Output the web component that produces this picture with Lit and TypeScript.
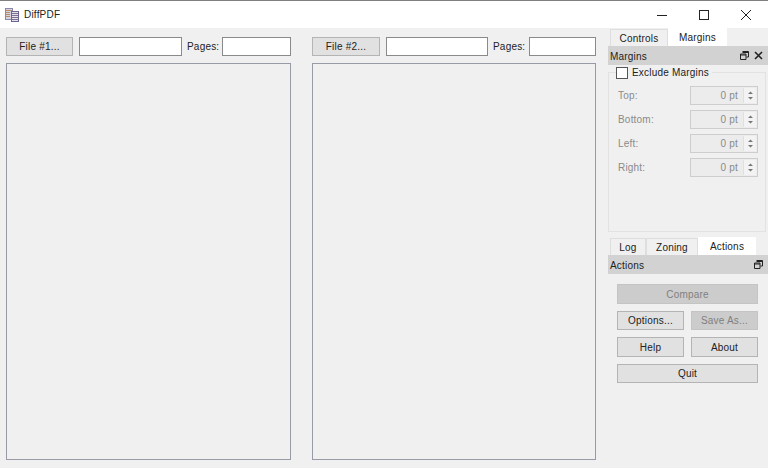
import { LitElement, html, css, svg } from "lit";
import { customElement } from "lit/decorators.js";

const floatIcon = svg`<svg class="ico" width="9" height="9" viewBox="0 0 9 9"><path d="M2.5.5h6v5.5H6.5M.5 3h5.5v5.5H.5z" fill="none" stroke="#222"/><path d="M2.5 1.5h6M.5 4h5.5" stroke="#222"/></svg>`;
const closeIcon = svg`<svg class="ico" width="9" height="9" viewBox="0 0 9 9"><path d="M1 1l7 7M8 1l-7 7" stroke="#222" stroke-width="1.6"/></svg>`;

@customElement("app-root")
export class AppRoot extends LitElement {
  static styles = css`
    :host { display: block; width: 768px; height: 468px; overflow: hidden; background: #f0f0f0; color: #222;
      font-family: "Liberation Sans", sans-serif; font-size: 10px; line-height: 14px; letter-spacing: 0.2px; }
    * { box-sizing: border-box; }
    .title { height: 28px; background: #fff; border-top: 1px solid #808080; display: flex; align-items: center; padding-left: 4px; }
    .title .name { margin-left: 4px; }
    .winbtns { margin-left: auto; margin-right: 1px; display: flex; }
    .winbtn { width: 42px; height: 27px; display: flex; align-items: center; justify-content: center; }
    .main { display: flex; height: 440px; }
    .pane { width: 285px; margin-left: 6px; padding-top: 9px; display: flex; flex-direction: column; gap: 7px; }
    .pane.second { margin-left: 21px; width: 284px; }
    .top { display: flex; align-items: center; height: 19px; }
    .btn { height: 19px; padding-top: 1px; border: 1px solid #b4b4b4; background: #e1e1e1; display: flex; align-items: center; justify-content: center; }
    .btn.file { width: 67px; margin-right: 6px; }
    .pane.second .btn.file { width: 68px; }
    .input { height: 19px; background: #fff; border: 1px solid #8a8a8a; }
    .input.path { width: 103px; }
    .input.pages { width: 69px; }
    .pane.second .input.pages { width: 67px; }
    .pane.second .input.path { width: 102px; }
    .plabel { margin-left: 5px; width: 35px; }
    .pane.second .plabel { width: 36px; }
    .frame { height: 397px; border: 1px solid #979ba6; }
    .dock { width: 160px; margin-left: 12px; display: flex; flex-direction: column; padding-top: 1px; }
    .tabs { display: flex; height: 17px; padding-left: 2px; }
    .tab { height: 17px; padding-top: 1px; border: 1px solid #dedede; border-bottom: 0; display: flex; align-items: center; justify-content: center; background: #f0f0f0; }
    .tab.on { height: 18px; margin-top: -1px; padding-top: 0; background: #fff; border-color: #fff; }
    .dtitle { height: 19px; background: #d2d2d2; display: flex; align-items: center; padding: 0 5px 0 2px; gap: 5px; }
    .dtitle .t { flex: 1; padding-top: 2px; }
    .ico { display: block; }
    .margins { height: 173px; position: relative; }
    .group { margin-top: 7px; margin-right: 2px; height: 160px; border: 1px solid #e2e2e2; padding: 13px 7px 0 9px; display: flex; flex-direction: column; gap: 5px; }
    .check { position: absolute; left: 8px; top: 2px; display: flex; align-items: center; gap: 4px; background: #f0f0f0; padding-right: 3px; height: 12px; }
    .box { width: 12px; height: 12px; background: #fff; border: 1px solid #555; }
    .row { display: flex; align-items: center; height: 19px; justify-content: space-between; color: #8a8a8a; }
    .spin { width: 68px; height: 19px; border: 1px solid #cdcdcd; background: #ececec; display: flex; align-items: center; justify-content: flex-end; color: #8a8a8a; }
    .arrows { width: 13px; margin: 0 1px 0 5px; height: 15px; background: #f3f3f3; border-left: 1px solid #e0e0e0; display: flex; align-items: center; justify-content: center; }
    .actions { padding: 10px 10px 0 9px; display: grid; grid-template-columns: 67px 67px; gap: 7px; justify-content: space-between; }
    .wide { grid-column: 1 / 3; }
    .btn.tall { height: 20px; }
    .btn.disabled { background: #cccccc; border-color: #c4c4c4; color: #808080; }
  `;

  pane(label: string, second: boolean) {
    return html`<div class="pane ${second ? "second" : ""}">
      <div class="top">
        <div class="btn file">${label}</div>
        <div class="input path"></div>
        <div class="plabel">Pages:</div>
        <div class="input pages"></div>
      </div>
      <div class="frame"></div>
    </div>`;
  }

  row(label: string) {
    return html`<div class="row"><span>${label}</span><div class="spin">0 pt<div class="arrows">
      <svg width="7" height="11" viewBox="0 0 7 11"><path d="M3.5 1.5L6 4H1zM3.5 9.5L1 7h5z" fill="#777"/></svg></div></div></div>`;
  }

  render() {
    return html`
      <div class="title">
        <svg width="16" height="16" viewBox="0 0 16 16">
          <rect x="1.5" y="1.5" width="7" height="11" fill="#d4d5e0" stroke="#8b88a8"/>
          <rect x="7.5" y="4.5" width="7" height="10" fill="#e6e4ea" stroke="#6a6492"/>
          <path d="M2 3.5h6M2 5.5h4M2 7.5h4M2 9.5h4" stroke="#b98a6a"/>
          <path d="M8 6.5h6M8 8.5h6M8 10.5h6M8 12.5h6" stroke="#7d6f92"/>
        </svg>
        <span class="name">DiffPDF</span>
        <div class="winbtns">
          <div class="winbtn"><svg width="10" height="10" viewBox="0 0 10 10"><path d="M0 5.5h10" stroke="#222"/></svg></div>
          <div class="winbtn"><svg width="10" height="10" viewBox="0 0 10 10"><rect x=".5" y=".5" width="9" height="9" fill="none" stroke="#222"/></svg></div>
          <div class="winbtn"><svg width="10" height="10" viewBox="0 0 10 10"><path d="M0 0l10 10M10 0L0 10" stroke="#222"/></svg></div>
        </div>
      </div>
      <div class="main">
        ${this.pane("File #1...", false)}
        ${this.pane("File #2...", true)}
        <div class="dock">
          <div class="tabs">
            <div class="tab" style="width:58px">Controls</div>
            <div class="tab on" style="width:59px">Margins</div>
          </div>
          <div class="dtitle"><span class="t">Margins</span>${floatIcon}${closeIcon}</div>
          <div class="margins">
            <div class="group">
              ${this.row("Top:")}${this.row("Bottom:")}${this.row("Left:")}${this.row("Right:")}
            </div>
            <div class="check"><div class="box"></div>Exclude Margins</div>
          </div>
          <div class="tabs">
            <div class="tab" style="width:36px">Log</div>
            <div class="tab" style="width:52px">Zoning</div>
            <div class="tab on" style="width:58px">Actions</div>
          </div>
          <div class="dtitle"><span class="t">Actions</span>${floatIcon}</div>
          <div class="actions">
            <div class="btn disabled wide tall">Compare</div>
            <div class="btn">Options...</div>
            <div class="btn disabled">Save As...</div>
            <div class="btn tall">Help</div>
            <div class="btn tall">About</div>
            <div class="btn wide">Quit</div>
          </div>
        </div>
      </div>
    `;
  }
}
